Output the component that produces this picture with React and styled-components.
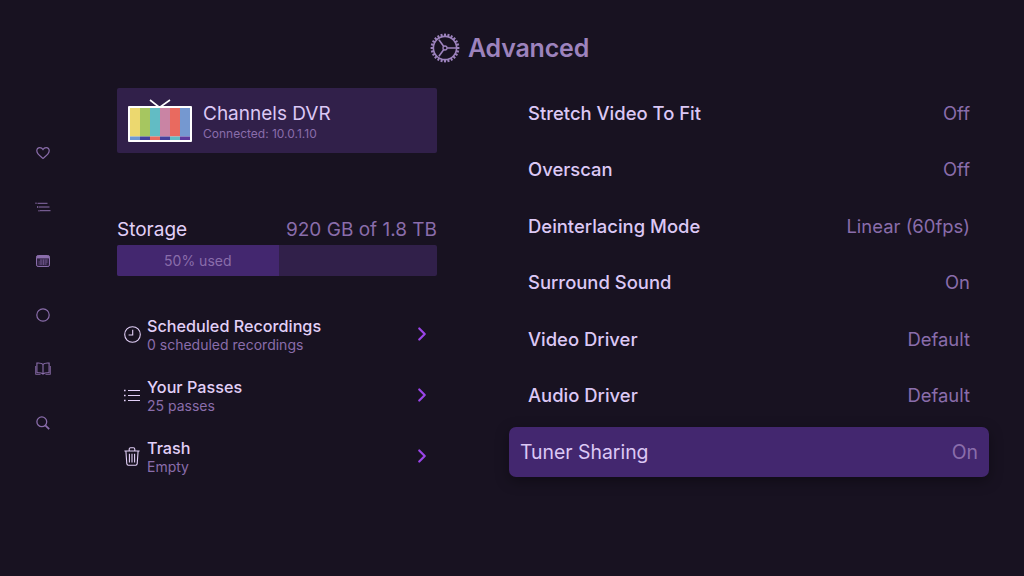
import React from "react";
import styled, { createGlobalStyle } from "styled-components";
import { LuChevronRight } from "react-icons/lu";

const GlobalStyle = createGlobalStyle`
  html, body {
    margin: 0;
    padding: 0;
    background: #181221;
    font-family: Inter, "Noto Sans", sans-serif;
  }
`;

const settings = [
  { label: "Stretch Video To Fit", value: "Off" },
  { label: "Overscan", value: "Off" },
  { label: "Deinterlacing Mode", value: "Linear (60fps)" },
  { label: "Surround Sound", value: "On" },
  { label: "Video Driver", value: "Default" },
  { label: "Audio Driver", value: "Default" },
  { label: "Tuner Sharing", value: "On", focused: true },
];

const bars = [
  ["#ecd86f", "#6f97d2"],
  ["#a6c660", "#43419c"],
  ["#62bcc4", "#e96a5f"],
  ["#c984a4", "#43419c"],
  ["#e96a5f", "#62bcc4"],
  ["#7598d0", "#5e3a9c"],
];

const HeartIcon = () => (
  <svg width="14" height="14" viewBox="0 0 14 14" fill="none" stroke="currentColor" strokeWidth="1.2">
    <path d="M7 12.4 C4.6 10.5 .8 8 .8 4.8 C.8 2.9 2.2 1.6 3.9 1.6 C5.2 1.6 6.3 2.3 7 3.5 C7.7 2.3 8.8 1.6 10.1 1.6 C11.8 1.6 13.2 2.9 13.2 4.8 C13.2 8 9.4 10.5 7 12.4 Z" />
  </svg>
);

const QueueIcon = () => (
  <svg width="16" height="12" viewBox="0 0 16 12" fill="none" stroke="currentColor" strokeWidth="1">
    <path d="M2.5 2.3 H12.5 M3.5 6 H14.5 M5 9.7 H15.5" />
    <path d="M.5 2.3 H1.5 M2 6 H3 M3.5 9.7 H4.5" strokeWidth="1.4" />
  </svg>
);

const CalendarIcon = () => (
  <svg width="14" height="12" viewBox="0 0 14 12">
    <rect x=".5" y=".5" width="13" height="11" rx="1.6" fill="#2e2140" stroke="currentColor" />
    <rect x="1" y="1" width="12" height="2.4" fill="currentColor" />
    <path d="M4 5 H12 M2.5 7 H12 M2.5 9 H10 M5 4.5 V10 M7.5 4.5 V10 M10 4.5 V10" stroke="currentColor" strokeWidth=".7" opacity=".7" fill="none" />
  </svg>
);

const CircleIcon = () => (
  <svg width="14" height="14" viewBox="0 0 14 14" fill="none" stroke="currentColor" strokeWidth="1.2">
    <circle cx="7" cy="7" r="6.2" />
  </svg>
);

const BookIcon = () => (
  <svg width="16" height="14" viewBox="0 0 16 14" fill="none" stroke="currentColor" strokeWidth="1.1">
    <path d="M8 2.4 C6.8 1.2 4.6 .9 1.9 1.1 V10.8 C4.6 10.6 6.8 10.9 8 12 C9.2 10.9 11.4 10.6 14.1 10.8 V1.1 C11.4 .9 9.2 1.2 8 2.4 Z M8 2.4 V12" />
    <path d="M.6 4 V12.4 H5.5 M15.4 4 V12.4 H10.5" strokeWidth=".8" />
  </svg>
);

const SearchIcon = () => (
  <svg width="14" height="14" viewBox="0 0 14 14" fill="none" stroke="currentColor" strokeWidth="1.3">
    <circle cx="5.8" cy="5.8" r="4.9" />
    <path d="M9.3 9.3 L13.2 13.2" strokeWidth="1.7" />
  </svg>
);

const ClockIcon = () => (
  <svg width="17" height="17" viewBox="0 0 17 17" fill="none" stroke="currentColor" strokeWidth="1.1">
    <circle cx="8.5" cy="8.5" r="7.8" />
    <path d="M8.7 3.8 V9 H4.6" />
  </svg>
);

const ListIcon = () => (
  <svg width="16" height="13" viewBox="0 0 16 13" fill="none" stroke="currentColor" strokeWidth="1.1">
    <path d="M4 1.5 H16 M4 6.5 H16 M4 11.5 H16" />
    <path d="M0 1.5 H1.6 M0 6.5 H1.6 M0 11.5 H1.6" strokeWidth="1.5" />
  </svg>
);

const TrashIcon = () => (
  <svg width="16" height="19" viewBox="0 0 16 19" fill="none" stroke="currentColor" strokeWidth="1.1">
    <path d="M.4 4 H15.6 M5.2 4 V2.2 C5.2 1.2 5.8 .7 6.6 .7 H9.4 C10.2 .7 10.8 1.2 10.8 2.2 V4" />
    <path d="M1.9 4 L2.8 16.6 C2.9 17.6 3.5 18.2 4.4 18.2 H11.6 C12.5 18.2 13.1 17.6 13.2 16.6 L14.1 4" />
    <path d="M5.4 6.8 V15.4 M8 6.8 V15.4 M10.6 6.8 V15.4" />
  </svg>
);

const gearTeeth = Array.from({ length: 24 }, (_, i) => i * 15);

const GearIcon = () => (
  <svg width="30" height="30" viewBox="0 0 30 30" fill="none" stroke="currentColor">
    {gearTeeth.map((deg) => (
      <rect key={deg} x="14" y="0.6" width="2" height="3" fill="currentColor" stroke="none" transform={`rotate(${deg} 15 15)`} />
    ))}
    <circle cx="15" cy="15" r="11.6" strokeWidth="1.6" />
    <circle cx="15" cy="15" r="2" strokeWidth="1.3" />
    <path d="M13.8 13.4 L8.9 6.8 M17 15 H26 M13.8 16.6 L8.9 23.2" strokeWidth="1.6" />
  </svg>
);

const TvLogo = () => (
  <svg width="64" height="43" viewBox="0 0 64 43">
    <path d="M22 1 L31.5 8.5 L42 1" fill="none" stroke="#fff" strokeWidth="1.6" />
    <rect x="0" y="7" width="64" height="36" rx="1" fill="#fff" />
    {bars.map(([top, bottom], i) => (
      <g key={top + i}>
        <rect x={2 + i * 10} y="9" width="10" height="28.5" fill={top} />
        <rect x={2 + i * 10} y="37.5" width="10" height="3.5" fill={bottom} />
      </g>
    ))}
  </svg>
);

const Page = styled.div`
  width: 1024px;
  height: 576px;
  overflow: hidden;
  background: #181221;
  display: flex;
  flex-direction: column;
`;

const Header = styled.header`
  height: 85px;
  padding: 10px 5px 0 0;
  box-sizing: border-box;
  display: flex;
  align-items: center;
  justify-content: center;
  gap: 8px;
  color: #9d83bd;
`;

const Title = styled.h1`
  margin: 0;
  font-size: 25px;
  font-weight: 600;
  letter-spacing: -0.2px;
`;

const Main = styled.main`
  display: flex;
  align-items: flex-start;
`;

const Sidebar = styled.nav`
  width: 85px;
  margin-right: 32px;
  padding-top: 41px;
  display: flex;
  flex-direction: column;
  color: #8a6dab;
`;

const NavItem = styled.div`
  height: 54px;
  display: flex;
  align-items: center;
  justify-content: center;
`;

const LeftColumn = styled.section`
  width: 320px;
  margin-right: 72px;
  padding-top: 3px;
`;

const ServerCard = styled.div`
  height: 65px;
  box-sizing: border-box;
  padding: 0 0 0 11px;
  border-radius: 2px;
  background: #31204a;
  display: flex;
  align-items: center;
  gap: 11px;
`;

const TvWrap = styled.div`
  height: 43px;
`;

const ServerText = styled.div`
  padding-top: 2px;
`;

const ServerName = styled.div`
  font-size: 19px;
  line-height: 24px;
  color: #dcc8f5;
`;

const ServerStatus = styled.div`
  font-size: 12px;
  line-height: 16px;
  color: #8a6dab;
`;

const StorageHead = styled.div`
  margin-top: 62px;
  height: 30px;
  padding-bottom: 1px;
  box-sizing: border-box;
  display: flex;
  align-items: center;
  justify-content: space-between;
  font-size: 19px;
  color: #e2d0f8;
`;

const StorageValue = styled.span`
  color: #8a6dab;
`;

const StorageBar = styled.div`
  height: 31px;
  border-radius: 2px;
  background: #31204a;
  overflow: hidden;
`;

const StorageFill = styled.div`
  height: 100%;
  background: #43276f;
  display: flex;
  align-items: center;
  justify-content: center;
  font-size: 14px;
  color: #8a6dab;
`;

const LinkList = styled.div`
  margin-top: 28px;
`;

const LinkRow = styled.div`
  height: 61px;
  display: flex;
  align-items: center;
  color: #e2d0f8;
`;

const LinkIcon = styled.div`
  width: 30px;
  display: flex;
  justify-content: center;
`;

const LinkText = styled.div`
  flex: 1;
  padding-top: 1px;
`;

const LinkTitle = styled.div`
  font-size: 16.2px;
  font-weight: 500;
  line-height: 20px;
  color: #e2d0f8;
`;

const LinkSub = styled.div`
  font-size: 14px;
  line-height: 18px;
  color: #8a6dab;
`;

const Arrow = styled(LuChevronRight)`
  width: 22px;
  height: 22px;
  margin: -2px 4px 0 0;
  color: #9a45e8;
  stroke-width: 2.4;
`;

const SettingsList = styled.section`
  width: 480px;
  margin-top: -0.5px;
  display: flex;
  flex-direction: column;
`;

const SettingRow = styled.div`
  height: 56.5px;
  display: flex;
  align-items: center;
`;

const SettingBody = styled.div`
  flex: 1;
  display: flex;
  align-items: center;
  justify-content: space-between;
  height: ${(p) => (p.$focused ? "50px" : "auto")};
  padding: ${(p) => (p.$focused ? "0 11px" : "0 19px")};
  border-radius: ${(p) => (p.$focused ? "7px" : "0")};
  background: ${(p) => (p.$focused ? "#43276f" : "transparent")};
  box-shadow: ${(p) => (p.$focused ? "0 4px 14px rgba(0, 0, 0, 0.35)" : "none")};
  font-size: ${(p) => (p.$focused ? "19.4px" : "18.45px")};
  font-weight: ${(p) => (p.$focused ? 400 : 450)};
  color: #dcc8f5;
`;

const SettingValue = styled.span`
  font-weight: 400;
  color: #8a6dab;
`;

export default function App() {
  return (
    <Page>
      <GlobalStyle />
      <Header>
        <GearIcon />
        <Title>Advanced</Title>
      </Header>
      <Main>
        <Sidebar>
          <NavItem><HeartIcon /></NavItem>
          <NavItem><QueueIcon /></NavItem>
          <NavItem><CalendarIcon /></NavItem>
          <NavItem><CircleIcon /></NavItem>
          <NavItem><BookIcon /></NavItem>
          <NavItem><SearchIcon /></NavItem>
        </Sidebar>
        <LeftColumn>
          <ServerCard>
            <TvWrap><TvLogo /></TvWrap>
            <ServerText>
              <ServerName>Channels DVR</ServerName>
              <ServerStatus>Connected: 10.0.1.10</ServerStatus>
            </ServerText>
          </ServerCard>
          <StorageHead>
            <span>Storage</span>
            <StorageValue>920 GB of 1.8 TB</StorageValue>
          </StorageHead>
          <StorageBar>
            <StorageFill style={{ width: "50.5%" }}>50% used</StorageFill>
          </StorageBar>
          <LinkList>
            <LinkRow>
              <LinkIcon><ClockIcon /></LinkIcon>
              <LinkText>
                <LinkTitle>Scheduled Recordings</LinkTitle>
                <LinkSub>0 scheduled recordings</LinkSub>
              </LinkText>
              <Arrow />
            </LinkRow>
            <LinkRow>
              <LinkIcon><ListIcon /></LinkIcon>
              <LinkText>
                <LinkTitle>Your Passes</LinkTitle>
                <LinkSub>25 passes</LinkSub>
              </LinkText>
              <Arrow />
            </LinkRow>
            <LinkRow>
              <LinkIcon><TrashIcon /></LinkIcon>
              <LinkText>
                <LinkTitle>Trash</LinkTitle>
                <LinkSub>Empty</LinkSub>
              </LinkText>
              <Arrow />
            </LinkRow>
          </LinkList>
        </LeftColumn>
        <SettingsList>
          {settings.map((s) => (
            <SettingRow key={s.label}>
              <SettingBody $focused={s.focused}>
                <span>{s.label}</span>
                <SettingValue>{s.value}</SettingValue>
              </SettingBody>
            </SettingRow>
          ))}
        </SettingsList>
      </Main>
    </Page>
  );
}
